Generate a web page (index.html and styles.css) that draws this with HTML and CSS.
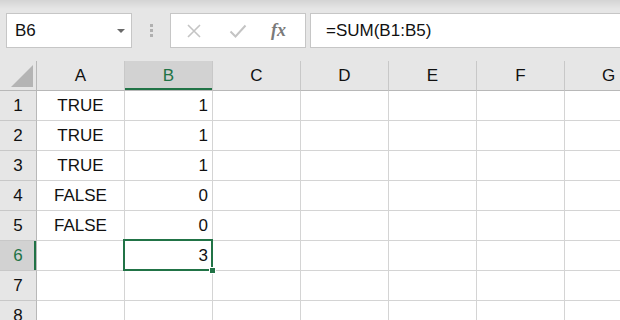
FILE: index.html
```html
<!DOCTYPE html>
<html lang="ja">
<head>
  <meta charset="UTF-8">
  <title>SUM of TRUE/FALSE</title>
  <link rel="stylesheet" href="styles.css">
</head>
<body>

  <div class="toolbar">
    <div class="name-box">
      <span>B6</span>
      <span class="arrow"></span>
    </div>
    <div class="grip">
      <i></i><i></i><i></i>
    </div>
    <div class="fx-box">
      <svg class="icon" width="16" height="16" viewBox="0 0 16 16">
        <path d="M2 2 L14 14 M14 2 L2 14" stroke="#c4c4c4" stroke-width="1.6" fill="none"/>
      </svg>
      <svg class="icon" width="18" height="16" viewBox="0 0 18 16">
        <path d="M1.5 8.5 L6.5 13.5 L16.5 2.5" stroke="#c4c4c4" stroke-width="2" fill="none"/>
      </svg>
      <span class="fx">fx</span>
    </div>
    <div class="formula">=SUM(B1:B5)</div>
  </div>

  <div class="sheet">
    <div class="corner"><span class="tri"></span></div>
    <div class="col-head">A</div>
    <div class="col-head active">B</div>
    <div class="col-head">C</div>
    <div class="col-head">D</div>
    <div class="col-head">E</div>
    <div class="col-head">F</div>
    <div class="col-head">G</div>

    <div class="row-head">1</div>
    <div class="cell center">TRUE</div>
    <div class="cell num">1</div>
    <div class="cell"></div><div class="cell"></div><div class="cell"></div><div class="cell"></div><div class="cell"></div>

    <div class="row-head">2</div>
    <div class="cell center">TRUE</div>
    <div class="cell num">1</div>
    <div class="cell"></div><div class="cell"></div><div class="cell"></div><div class="cell"></div><div class="cell"></div>

    <div class="row-head">3</div>
    <div class="cell center">TRUE</div>
    <div class="cell num">1</div>
    <div class="cell"></div><div class="cell"></div><div class="cell"></div><div class="cell"></div><div class="cell"></div>

    <div class="row-head">4</div>
    <div class="cell center">FALSE</div>
    <div class="cell num">0</div>
    <div class="cell"></div><div class="cell"></div><div class="cell"></div><div class="cell"></div><div class="cell"></div>

    <div class="row-head">5</div>
    <div class="cell center">FALSE</div>
    <div class="cell num">0</div>
    <div class="cell"></div><div class="cell"></div><div class="cell"></div><div class="cell"></div><div class="cell"></div>

    <div class="row-head active">6</div>
    <div class="cell"></div>
    <div class="cell num selected">3<span class="handle"></span></div>
    <div class="cell"></div><div class="cell"></div><div class="cell"></div><div class="cell"></div><div class="cell"></div>

    <div class="row-head">7</div>
    <div class="cell"></div><div class="cell"></div>
    <div class="cell"></div><div class="cell"></div><div class="cell"></div><div class="cell"></div><div class="cell"></div>

    <div class="row-head">8</div>
    <div class="cell"></div><div class="cell"></div>
    <div class="cell"></div><div class="cell"></div><div class="cell"></div><div class="cell"></div><div class="cell"></div>
  </div>

</body>
</html>
```

FILE: styles.css
```css
body {
  margin: 0;
  width: 620px;
  height: 320px;
  overflow: hidden;
  background: #e6e6e6;
  font-family: "Liberation Sans", "Noto Sans CJK JP", sans-serif;
  color: #111;
}

/* formula bar */
.toolbar {
  height: 61px;
  box-sizing: border-box;
  padding: 13px 0 13px 6px;
  display: flex;
  background: linear-gradient(#d4d4d4 0, #e6e6e6 9px, #e6e6e6 100%);
}

.name-box {
  width: 126px;
  height: 35px;
  box-sizing: border-box;
  background: #fff;
  border: 1px solid #c6c6c6;
  display: flex;
  align-items: center;
  justify-content: space-between;
  padding: 0 6px 0 8px;
  font-size: 17px;
}

.name-box .arrow {
  width: 0;
  height: 0;
  border-left: 4px solid transparent;
  border-right: 4px solid transparent;
  border-top: 4px solid #6a6a6a;
}

.grip {
  width: 38px;
  display: flex;
  flex-direction: column;
  align-items: center;
  justify-content: center;
  gap: 2px;
}

.grip i {
  width: 3px;
  height: 3px;
  background: #b0b0b0;
}

.fx-box {
  width: 136px;
  height: 35px;
  box-sizing: border-box;
  background: #fff;
  border: 1px solid #c6c6c6;
  display: flex;
  align-items: center;
  padding-left: 15px;
  gap: 27px;
}

.fx {
  font-family: "Liberation Serif", serif;
  font-style: italic;
  font-weight: bold;
  font-size: 18px;
  color: #7a7a7a;
  margin-left: -3px;
}

.formula {
  flex: 1;
  height: 35px;
  box-sizing: border-box;
  margin-left: 4px;
  background: #fff;
  border: 1px solid #c6c6c6;
  border-right: none;
  padding-left: 15px;
  display: flex;
  align-items: center;
  font-size: 17px;
}

/* grid */
.sheet {
  display: grid;
  grid-template-columns: 37px repeat(7, 88px);
  grid-auto-rows: 30px;
  background: #fff;
}

.sheet > div {
  box-sizing: border-box;
  border-right: 1px solid #d4d4d4;
  border-bottom: 1px solid #d4d4d4;
  font-size: 17px;
  display: flex;
  align-items: center;
}

.corner {
  background: #e6e6e6;
  border-color: #b8b8b8 !important;
  position: relative;
}

.corner .tri {
  position: absolute;
  left: 11px;
  top: 4px;
  width: 22px;
  height: 22px;
  background: #b4b4b4;
  clip-path: polygon(100% 0, 100% 100%, 0 100%);
}

.col-head {
  background: #e6e6e6;
  justify-content: center;
  border-right-color: #c8c8c8 !important;
  border-bottom-color: #b8b8b8 !important;
}

.col-head.active {
  background: #d2d2d2;
  color: #217346;
  box-shadow: inset 0 -2px 0 #217346;
}

.row-head {
  background: #e6e6e6;
  justify-content: center;
  border-right-color: #b8b8b8 !important;
  border-bottom-color: #c8c8c8 !important;
}

.row-head.active {
  background: #d2d2d2;
  color: #217346;
  box-shadow: inset -2px 0 0 #217346;
}

.center {
  justify-content: center;
}

.num {
  justify-content: flex-end;
  padding-right: 4px;
}

.selected {
  position: relative;
}

.selected::after {
  content: "";
  position: absolute;
  left: -2px;
  top: -2px;
  right: -1px;
  bottom: -1px;
  border: 2px solid #217346;
}

.handle {
  position: absolute;
  right: -4px;
  bottom: -4px;
  width: 5px;
  height: 5px;
  background: #217346;
  border: 1px solid #fff;
  z-index: 2;
}
```
